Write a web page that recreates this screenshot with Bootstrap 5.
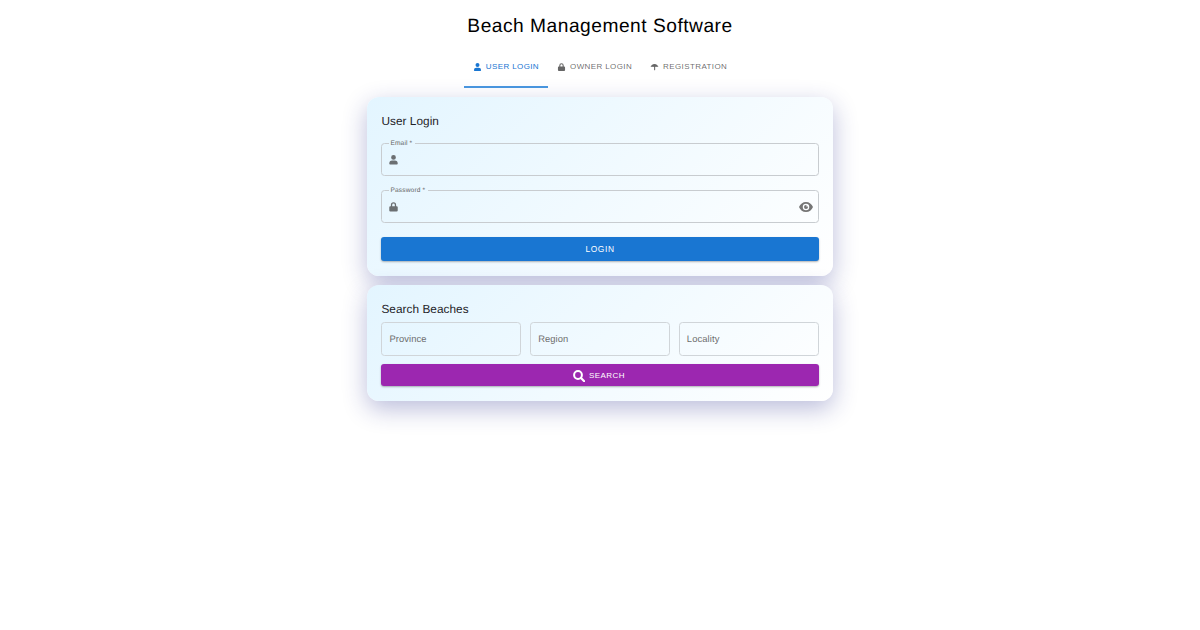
<!DOCTYPE html>
<html lang="en">
<head>
<meta charset="utf-8">
<title>Beach Management Software</title>
<link href="https://cdn.jsdelivr.net/npm/bootstrap@5.3.0/dist/css/bootstrap.min.css" rel="stylesheet">
<style>
html,body{height:100%;background:#fff;font-family:"Liberation Sans",Arial,sans-serif;overflow:hidden;text-rendering:geometricPrecision}
.app-title{font-size:19.2px;line-height:26px;letter-spacing:.5px;font-weight:400;color:#000;margin:0;padding-top:14px;text-align:center}
.tab-row{height:42px;margin-top:6px}
.tab-item{height:42px;padding:1px 9px 0;font-size:8px;letter-spacing:.39px;color:rgba(0,0,0,.6);text-transform:uppercase;gap:4px;border-bottom:2px solid transparent;background:none;border-top:0;border-left:0;border-right:0}
.tab-item svg{width:9px;height:8px;fill:currentColor;flex:none}
.tab-on{color:#1976d2;border-bottom-color:#4a98e0}
.panel-col{width:466px;gap:9px;margin-top:9px}
.glass{border-radius:12px;padding:14.4px 14.4px 15px;background:linear-gradient(135deg,#e3f5ff 0%,#ffffff 100%);box-shadow:0 8px 24px rgba(31,38,135,.3)}
.glass-head{font-size:11.8px;line-height:19px;color:#1f2328;letter-spacing:.05px;margin:0}
.login-panel .glass-head{padding-top:1px}
.out-field{height:37px;margin:0;padding:0 5px 0 7px;border:1px solid #c8ccd0;border-radius:3.5px;min-width:0;margin-top:-5px}
.out-field legend{float:none;width:auto;margin:0;padding:1px 3px 0 1px;font-size:6.6px;line-height:7px;color:#666;letter-spacing:.15px}
.field-body{height:25px}
.field-body .lead-ico{width:9px;height:9.5px;fill:#6b6f72;flex:none}
.field-body .eye-ico{width:14px;height:10px;fill:#757575;flex:none}
.plain-field{height:34px;border:1px solid #d0d5d9;border-radius:3.5px;padding:0 7px;font-size:9.4px;letter-spacing:.1px;color:#6e6e6e;flex:1 1 0;min-width:0}
.search-row{gap:9px;margin-top:3px}
.act-btn{border:0;border-radius:3px;color:#fff;font-size:8.4px;letter-spacing:.6px;text-transform:uppercase;box-shadow:0 1px 2px rgba(0,0,0,.3);width:100%;padding:0}
.act-login{height:24px;background:#1976d2;margin-top:14px}
.act-login:hover{background:#1976d2;color:#fff}
.act-search{height:22px;background:#9c27b0;gap:4px;margin-top:8.5px;font-size:8px;letter-spacing:.45px;padding:1px 2px 0 0}
.act-search svg{width:12px;height:12px;fill:none;stroke:#fff;flex:none}
.stack-gap{gap:15px;margin-top:13px}
</style>
</head>
<body>
<h1 class="app-title">Beach Management Software</h1>
<div class="tab-row d-flex justify-content-center">
  <button type="button" class="tab-item tab-on d-flex align-items-center">
    <svg viewBox="0 0 16 18"><path d="M8 9A4.500 4.500 0 1 0 8 0a4.500 4.500 0 0 0 0 9zM5.500 10.500A5.500 5.500 0 0 0 0 16v.5A1.500 1.500 0 0 0 1.500 18h13a1.500 1.500 0 0 0 1.500-1.500V16a5.500 5.500 0 0 0-5.500-5.500z"/></svg>User Login</button>
  <button type="button" class="tab-item d-flex align-items-center">
    <svg viewBox="0 0 16 18"><path d="M13 8V5.500a5 5 0 0 0-10 0V8H2a2 2 0 0 0-2 2v6a2 2 0 0 0 2 2h12a2 2 0 0 0 2-2v-6a2 2 0 0 0-2-2zM5.500 8V5.500a2.500 2.500 0 0 1 5 0V8z"/></svg>Owner Login</button>
  <button type="button" class="tab-item d-flex align-items-center">
    <svg viewBox="0 0 18 18"><path d="M9 2C4.500 2 1 5 0 9c1-1 2.500-1 3.500 0 1-1 2.500-1 4 0h.6v6c0 1 .6 1.500 1.300 1.500S10.500 16 10.500 15V9c1.500-1 3-1 4 0 1-1 2.500-1 3.500 0-1-4-4.500-7-9-7z"/></svg>Registration</button>
</div>
<main class="panel-col mx-auto d-flex flex-column">
  <section class="glass login-panel">
    <h2 class="glass-head">User Login</h2>
    <div class="d-flex flex-column stack-gap">
      <fieldset class="out-field">
        <legend>Email *</legend>
        <div class="field-body d-flex align-items-center">
          <svg class="lead-ico" viewBox="0 0 16 18"><path d="M8 9A4.500 4.500 0 1 0 8 0a4.500 4.500 0 0 0 0 9zM5.500 10.500A5.500 5.500 0 0 0 0 16v.5A1.500 1.500 0 0 0 1.500 18h13a1.500 1.500 0 0 0 1.500-1.500V16a5.500 5.500 0 0 0-5.500-5.500z"/></svg>
        </div>
      </fieldset>
      <fieldset class="out-field">
        <legend>Password *</legend>
        <div class="field-body d-flex align-items-center justify-content-between">
          <svg class="lead-ico" viewBox="0 0 16 18"><path d="M13 8V5.500a5 5 0 0 0-10 0V8H2a2 2 0 0 0-2 2v6a2 2 0 0 0 2 2h12a2 2 0 0 0 2-2v-6a2 2 0 0 0-2-2zM5.500 8V5.500a2.500 2.500 0 0 1 5 0V8z"/></svg>
          <svg class="eye-ico" viewBox="0 0 28 20"><path fill-rule="evenodd" d="M14 0C7.500 0 2.500 4 0 10c2.500 6 7.500 10 14 10s11.500-4 14-10C25.500 4 20.500 0 14 0zm0 16.500a6.500 6.500 0 1 1 0-13 6.500 6.500 0 0 1 0 13zM14 6a4 4 0 1 0 4 4c0-.5-.1-1-.3-1.400-.3.500-.8.800-1.400.800a1.700 1.700 0 0 1-1.700-1.700c0-.6.3-1.100.8-1.400C15 6.100 14.500 6 14 6z"/></svg>
        </div>
      </fieldset>
    </div>
    <button type="button" class="btn act-btn act-login d-block">Login</button>
  </section>
  <section class="glass">
    <h2 class="glass-head">Search Beaches</h2>
    <div class="d-flex search-row">
      <div class="plain-field d-flex align-items-center">Province</div>
      <div class="plain-field d-flex align-items-center">Region</div>
      <div class="plain-field d-flex align-items-center">Locality</div>
    </div>
    <button type="button" class="btn act-btn act-search d-flex align-items-center justify-content-center">
      <svg viewBox="0 0 12 12"><circle cx="5" cy="5" r="3.900" stroke-width="2"/><path d="M8 8l3.200 3.200" stroke-width="2.200" stroke-linecap="round"/></svg>Search</button>
  </section>
</main>
<script src="https://cdn.jsdelivr.net/npm/bootstrap@5.3.0/dist/js/bootstrap.bundle.min.js"></script>
</body>
</html>
